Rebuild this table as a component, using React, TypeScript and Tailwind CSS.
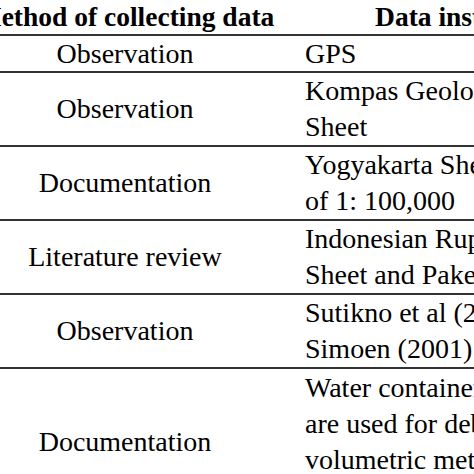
const rows: { method: string; lines: string[]; h: string }[] = [
  { method: "Observation", lines: ["GPS"], h: "h-[37px]" },
  { method: "Observation", lines: ["Kompas Geologi, Geological Map", "Sheet"], h: "h-[74px]" },
  { method: "Documentation", lines: ["Yogyakarta Sheet Geological Map", "of 1: 100,000"], h: "h-[74px]" },
  { method: "Literature review", lines: ["Indonesian Rupabumi Map of Yogyakarta", "Sheet and Pakem Sheet"], h: "h-[74px]" },
  { method: "Observation", lines: ["Sutikno et al (2007) and", "Simoen (2001)"], h: "h-[74px]" },
];

export default function App() {
  return (
    <div className="w-[474px] h-[474px] overflow-hidden bg-white font-['Liberation_Serif',serif] text-[28px] text-black">
      <div className="ml-[-48px] w-[704px]">
        {/* header */}
        <div className="flex h-[36px] items-center border-b-2 border-[#333] font-bold text-[27.5px]">
          <div className="w-[346px] text-center whitespace-nowrap leading-[34px]">Method of collecting data</div>
          <div className="w-[358px] text-center whitespace-nowrap leading-[34px]">Data instruments</div>
        </div>

        {rows.map((r, i) => (
          <div key={i} className={`flex items-center border-b-2 border-[#333] ${r.h}`}>
            <div className="w-[346px] text-center whitespace-nowrap leading-[36px]">{r.method}</div>
            <div className="w-[358px] pl-[7px]">
              {r.lines.map((l) => (
                <div key={l} className="whitespace-nowrap leading-[36px]">{l}</div>
              ))}
            </div>
          </div>
        ))}

        {/* last row runs past the bottom edge */}
        <div className="flex h-[146px] items-center">
          <div className="w-[346px] text-center whitespace-nowrap leading-[36px]">Documentation</div>
          <div className="w-[358px] pl-[7px]">
            <div className="whitespace-nowrap leading-[36px]">Water containers and stopwatch</div>
            <div className="whitespace-nowrap leading-[36px]">are used for debit measurement</div>
            <div className="whitespace-nowrap leading-[36px]">volumetric method in the</div>
            <div className="whitespace-nowrap leading-[36px]">springs</div>
          </div>
        </div>
      </div>
    </div>
  );
}
